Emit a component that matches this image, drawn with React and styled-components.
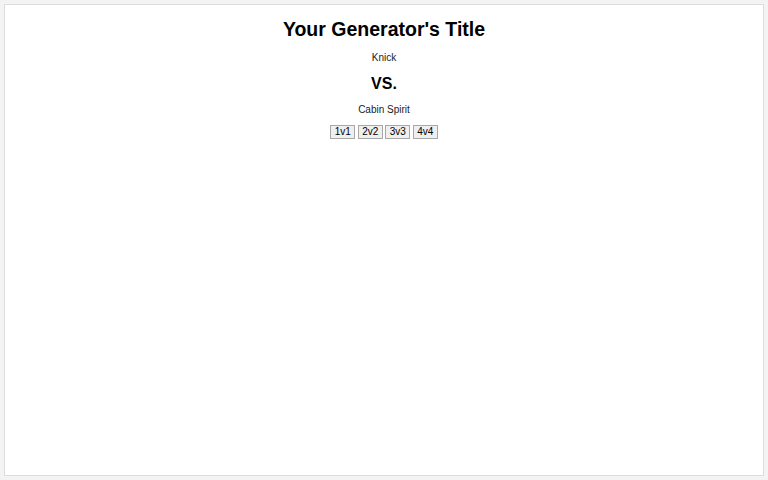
import React from "react";
import styled, { createGlobalStyle } from "styled-components";

const GlobalStyle = createGlobalStyle`
  html, body {
    margin: 0;
    padding: 0;
    background: #f3f3f3;
    font-family: "Liberation Sans", Arial, sans-serif;
  }
  body {
    padding: 4px;
  }
`;

const Page = styled.div`
  box-sizing: border-box;
  width: 760px;
  height: 472px;
  background: #ffffff;
  border: 1px solid #dcdcdc;
  padding-top: 12px;
  display: flex;
  flex-direction: column;
  align-items: center;
`;

const Title = styled.h1`
  margin: 0;
  font-size: 19.5px;
  line-height: 24px;
  font-weight: bold;
  color: #000;
`;

const Name = styled.p`
  margin: ${(p) => p.$top}px 0 0;
  font-size: 10px;
  line-height: 12px;
  color: #1a1a1a;
`;

const Versus = styled.h2`
  margin: 10px 0 0;
  font-size: 16px;
  line-height: 20px;
  font-weight: bold;
  color: #000;
`;

const ButtonRow = styled.div`
  margin-top: 9px;
  display: flex;
  gap: 2.5px;
`;

const ModeButton = styled.button`
  box-sizing: border-box;
  width: 25px;
  height: 14px;
  padding: 0;
  font-family: "Liberation Sans", Arial, sans-serif;
  font-size: 10px;
  line-height: 12px;
  background: #efefef;
  border: 1px solid #a8a8a8;
  border-radius: 0;
  color: #000;
`;

const modes = ["1v1", "2v2", "3v3", "4v4"];

export default function App() {
  return (
    <>
      <GlobalStyle />
      <Page>
        <Title>Your Generator's Title</Title>
        <Name $top={11}>Knick</Name>
        <Versus>VS.</Versus>
        <Name $top={10}>Cabin Spirit</Name>
        <ButtonRow>
          {modes.map((m) => (
            <ModeButton key={m}>{m}</ModeButton>
          ))}
        </ButtonRow>
      </Page>
    </>
  );
}
